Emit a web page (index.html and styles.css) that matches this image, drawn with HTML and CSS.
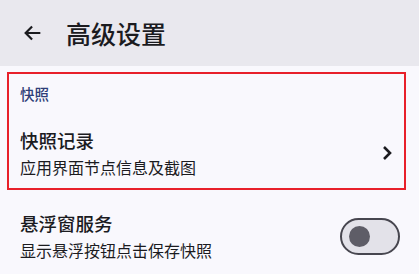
FILE: index.html
```html
<!DOCTYPE html>
<html lang="zh-CN">
<head>
    <meta charset="UTF-8">
    <meta name="viewport" content="width=device-width, initial-scale=1.0">
    <title>高级设置</title>
    <link rel="stylesheet" href="styles.css">
</head>
<body>
    <div class="topbar">
        <svg class="back" viewBox="0 0 24 24" width="22" height="22">
            <path d="M20 12H5M11 5l-7 7 7 7" fill="none" stroke="#1b1b1f" stroke-width="2.4"/>
        </svg>
        <div class="title">高级设置</div>
    </div>

    <!-- 快照 -->
    <div class="group">
        <div class="group-title">快照</div>
        <div class="item">
            <div class="item-text">
                <div class="item-name">快照记录</div>
                <div class="item-desc">应用界面节点信息及截图</div>
            </div>
            <svg class="chevron" viewBox="0 0 10 16" width="10" height="16">
                <path d="M2 2l6 6-6 6" fill="none" stroke="#1b1b1f" stroke-width="2.6"/>
            </svg>
        </div>
    </div>

    <div class="item plain">
        <div class="item-text">
            <div class="item-name">悬浮窗服务</div>
            <div class="item-desc">显示悬浮按钮点击保存快照</div>
        </div>
        <div class="switch"><div class="knob"></div></div>
    </div>
</body>
</html>
```

FILE: styles.css
```css
body {
    margin: 0;
    background-color: #f9f8fd;
    color: #1b1b1f;
    font-family: "Noto Sans CJK SC", "Noto Sans", sans-serif;
}
.topbar {
    height: 66px;
    background-color: #e9e8ee;
    display: flex;
    align-items: center;
    padding-left: 22px;
}
.back {
    margin-right: 22px;
}
.title {
    font-size: 25px;
    font-weight: 500;
}
.group {
    margin: 6px 13px 0 7px;
    border: 2px solid #e8202a;
    height: 114px;
}
.group-title {
    font-size: 14.5px;
    font-weight: 500;
    color: #2f3e78;
    padding: 9px 0 0 11px;
    height: 33px;
}
.item {
    display: flex;
    align-items: center;
    padding: 10px 12px 0 11px;
}
.item-text {
    flex: 1;
}
.item-name {
    font-size: 18.5px;
    font-weight: 500;
    line-height: 28px;
}
.item-desc {
    font-size: 16px;
    line-height: 26px;
}
.item.plain {
    padding: 19px 19px 0 20px;
}
.switch {
    width: 60px;
    height: 37px;
    border: 2.5px solid #47464f;
    border-radius: 20px;
    background-color: #e3e2e9;
    display: flex;
    align-items: center;
    padding-left: 7px;
    box-sizing: border-box;
}
.knob {
    width: 21px;
    height: 21px;
    border-radius: 50%;
    background-color: #5e5d67;
}
```
